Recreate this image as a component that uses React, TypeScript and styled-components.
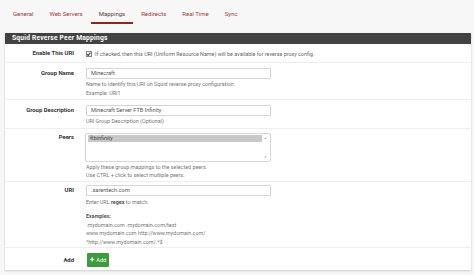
import React from "react";
import styled, { createGlobalStyle } from "styled-components";

const Global = createGlobalStyle`
  html, body {
    margin: 0;
    padding: 0;
    background: #f7f7f7;
    font-family: Roboto, "Liberation Sans", sans-serif;
    color: #333;
  }
`;

const Page = styled.div`
  width: 474px;
  height: 275px;
  overflow: hidden;
`;

const Tabs = styled.div`
  display: flex;
  height: 33px;
  padding-left: 5px;
`;

const Tab = styled.div<{ $active?: boolean }>`
  padding: 0 8px;
  height: 24px;
  display: flex;
  align-items: center;
  font-size: 6px;
  color: ${(p) => (p.$active ? "#5a3a3a" : "#a0403c")};
  border-bottom: 2px solid ${(p) => (p.$active ? "#8f2424" : "transparent")};
  box-sizing: border-box;
  padding-top: 4px;
`;

const Panel = styled.div`
  margin: 0 3px 0 5px;
  background: #fff;
  box-shadow: 0 1px 2px rgba(0, 0, 0, 0.18);
`;

const Heading = styled.div`
  background: #424242;
  color: #fff;
  font-weight: 700;
  font-size: 6.7px;
  letter-spacing: 0.2px;
  height: 11px;
  line-height: 11px;
  padding-left: 7px;
`;

const Row = styled.div<{ $pt?: number; $pb?: number }>`
  display: grid;
  grid-template-columns: 81px 1fr;
  border-top: 1px solid #eee;
  padding-top: ${(p) => p.$pt ?? 5}px;
  padding-bottom: ${(p) => p.$pb ?? 2}px;
  &:first-of-type {
    border-top: none;
  }
`;

const Label = styled.div<{ $h?: number }>`
  text-align: right;
  padding-right: 12px;
  font-size: 5.9px;
  font-weight: 700;
  color: #333;
  height: ${(p) => p.$h ?? 11}px;
  line-height: ${(p) => p.$h ?? 11}px;
`;

const Content = styled.div`
  font-size: 5.4px;
  color: #777;
`;

const Input = styled.div`
  width: 185px;
  height: 11px;
  box-sizing: border-box;
  border: 1px solid #d5d5d5;
  border-radius: 1px;
  padding-left: 4px;
  line-height: 9px;
  font-size: 5.6px;
  color: #555;
  background: #fff;
`;

const Help = styled.div<{ $mt?: number }>`
  font-size: 5.4px;
  line-height: 8.5px;
  color: #777;
  margin-top: ${(p) => p.$mt ?? 0}px;
  b {
    color: #555;
  }
`;

const CheckLine = styled.div`
  display: flex;
  align-items: center;
  height: 11px;
  gap: 3px;
  color: #666;
`;

const Check = styled.span`
  width: 4px;
  height: 4px;
  border: 0.5px solid #888;
  background: #eee;
  position: relative;
  &::after {
    content: "";
    position: absolute;
    left: 1px;
    top: 0;
    width: 1px;
    height: 2.5px;
    border: solid #333;
    border-width: 0 0.8px 0.8px 0;
    transform: rotate(40deg);
  }
`;

const ListBox = styled.div`
  width: 186px;
  height: 29px;
  box-sizing: border-box;
  border: 1px solid #d5d5d5;
  border-radius: 2px;
  display: flex;
  padding: 1px 1px 1px 2px;
  margin-left: -1px;
`;

const Options = styled.div`
  flex: 1;
`;

const Option = styled.div<{ $selected?: boolean }>`
  height: 7px;
  line-height: 7px;
  font-size: 5.4px;
  padding-left: 2px;
  color: #444;
  background: ${(p) => (p.$selected ? "#c8c8c8" : "transparent")};
`;

const Scroll = styled.div`
  width: 7px;
  display: flex;
  flex-direction: column;
  justify-content: space-between;
  align-items: center;
  font-size: 3px;
  color: #999;
  padding: 1px 0;
`;

const Button = styled.div`
  display: inline-flex;
  align-items: center;
  gap: 2px;
  height: 14px;
  padding: 0 3px 0 3px;
  margin-left: 1px;
  background: #3e9c3f;
  border-radius: 1px;
  color: #fff;
  font-size: 5.6px;
  box-sizing: border-box;
`;

const Plus = styled.span`
  font-weight: 900;
  font-size: 8px;
  line-height: 8px;
`;

export default function App() {
  return (
    <Page>
      <Global />
      <Tabs>
        <Tab>General</Tab>
        <Tab>Web Servers</Tab>
        <Tab $active>Mappings</Tab>
        <Tab>Redirects</Tab>
        <Tab>Real Time</Tab>
        <Tab>Sync</Tab>
      </Tabs>
      <Panel>
        <Heading>Squid Reverse Peer Mappings</Heading>
        <div>
          <Row $pt={4} $pb={3}>
            <Label>Enable This URI</Label>
            <Content>
              <CheckLine>
                <Check />
                If checked, then this URI (Uniform Resource Name) will be available for reverse proxy config.
              </CheckLine>
            </Content>
          </Row>
          <Row>
            <Label>Group Name</Label>
            <Content>
              <Input>Minecraft</Input>
              <Help $mt={1}>Name to identify this URI on Squid reverse proxy configuration.</Help>
              <Help>Example: URI1</Help>
            </Content>
          </Row>
          <Row>
            <Label>Group Description</Label>
            <Content>
              <Input>Minecraft Server FTB Infinity</Input>
              <Help $mt={1}>URI Group Description (Optional)</Help>
            </Content>
          </Row>
          <Row $pt={4} $pb={1}>
            <Label $h={9}>Peers</Label>
            <Content>
              <ListBox>
                <Options>
                  <Option $selected>ftbinfinity</Option>
                </Options>
                <Scroll>
                  <span>▲</span>
                  <span>▼</span>
                </Scroll>
              </ListBox>
              <Help $mt={1}>Apply these group mappings to the selected peers.</Help>
              <Help>Use CTRL + click to select multiple peers.</Help>
            </Content>
          </Row>
          <Row $pt={3} $pb={1}>
            <Label>URI</Label>
            <Content>
              <Input>.sarentech.com</Input>
              <Help $mt={2}>
                Enter URL <b>regex</b> to match.
              </Help>
              <Help $mt={6}>
                <b>Examples:</b>
                <br />
                .mydomain.com .mydomain.com/test
                <br />
                www.mydomain.com http://www.mydomain.com/
                <br />
                ^http://www.mydomain.com/.*$
              </Help>
            </Content>
          </Row>
          <Row $pt={5} $pb={3}>
            <Label $h={14}>Add</Label>
            <Content>
              <Button>
                <Plus>+</Plus>
                Add
              </Button>
            </Content>
          </Row>
        </div>
      </Panel>
    </Page>
  );
}
